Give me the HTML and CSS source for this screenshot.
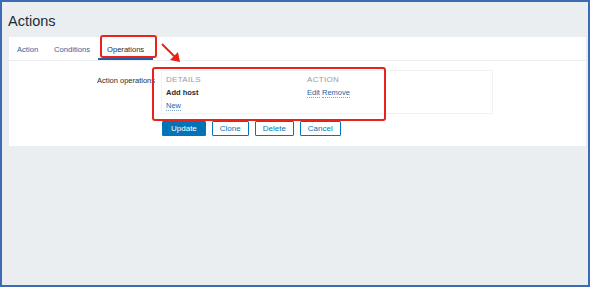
FILE: index.html
```html
<!DOCTYPE html>
<html>
<head>
<meta charset="utf-8">
<link rel="stylesheet" href="styles.css">
</head>
<body>
<div class="frame">
  <div class="topmark"></div>
  <header class="header"><h1 class="title">Actions</h1></header>
  <section class="card">
    <nav class="tabs">
      <a class="tab">Action</a>
      <a class="tab">Conditions</a>
      <a class="tab active">Operations</a>
    </nav>
    <div class="form">
      <div class="row">
        <label class="label">Action operations</label>
        <div class="ops">
          <div class="ops-grid">
            <div class="th">DETAILS</div>
            <div class="th">ACTION</div>
            <div class="td strong">Add host</div>
            <div class="td"><a class="link">Edit</a> <a class="link">Remove</a></div>
            <div class="td"><a class="link">New</a></div>
            <div class="td"></div>
          </div>
        </div>
      </div>
      <div class="buttons">
        <button class="btn primary">Update</button>
        <button class="btn">Clone</button>
        <button class="btn">Delete</button>
        <button class="btn">Cancel</button>
      </div>
    </div>
  </section>
  <div class="mark mark-tab"></div>
  <div class="mark mark-table"></div>
  <svg class="arrow" width="24" height="24" viewBox="0 0 24 24">
    <line x1="1" y1="1" x2="14" y2="14" stroke="#e8231b" stroke-width="2"/>
    <polygon points="9,17 19,19 17,9" fill="#e8231b"/>
  </svg>
</div>
</body>
</html>
```
FILE: styles.css
```css
* { box-sizing: border-box; }
html, body { margin: 0; padding: 0; }
body { font-family: "Liberation Sans", Arial, sans-serif; color: #1f2c33; }
.frame {
  position: relative;
  width: 590px;
  height: 287px;
  border: 2px solid #3d6bb3;
  background: #ebeef0;
  overflow: hidden;
}
.topmark {
  position: absolute;
  top: -2px;
  left: 208px;
  width: 28px;
  height: 2px;
  background: #5c9ae6;
}
.header {
  height: 35px;
  display: flex;
  align-items: center;
  padding-left: 6px;
}
.title {
  margin: 0;
  font-size: 14.5px;
  font-weight: normal;
  color: #1f2c33;
  padding-top: 2px;
}
.card {
  margin: 0 2px 0 7px;
  background: #fff;
  height: 109px;
}
.tabs {
  display: flex;
  height: 24px;
  border-bottom: 1px solid #ebeef0;
}
.tab {
  font-size: 7.6px;
  color: #1f65a6;
  padding: 0 8px;
  height: 23px;
  display: flex;
  align-items: center;
  padding-top: 4px;
  border-bottom: 2px solid transparent;
}
.tab.active {
  color: #1f2c33;
  border-bottom-color: #1f5fa6;
  padding: 4px 9px 0 9px;
}
.form { padding-top: 9px; }
.row { display: flex; }
.label {
  width: 152px;
  text-align: right;
  font-size: 7.5px;
  color: #1f2c33;
  padding-top: 6px;
  padding-right: 6px;
}
.ops {
  width: 332px;
  height: 44px;
  border: 1px solid #f1f2f3;
  padding: 2px 0 0 4px;
}
.ops-grid {
  display: grid;
  grid-template-columns: 141px 1fr;
  grid-auto-rows: 13px;
  font-size: 7.5px;
}
.th {
  color: #949ea5;
  letter-spacing: 0.3px;
  font-size: 8px;
  padding-top: 2px;
}
.td { padding-top: 2px; }
.strong { font-weight: bold; color: #1f2c33; }
.link {
  color: #1f65a6;
  border-bottom: 1px dotted #7ea6cc;
}
.buttons {
  display: flex;
  gap: 6px;
  padding-left: 153px;
  padding-top: 7px;
}
.btn {
  font-family: "Liberation Sans", Arial, sans-serif;
  font-size: 8px;
  height: 15px;
  padding: 0 7px;
  border: 1px solid #0275b8;
  border-radius: 1px;
  background: #fff;
  color: #0275b8;
  line-height: 13px;
}
.btn.primary { background: #0275b8; color: #fff; padding: 0 8px; }
.mark {
  position: absolute;
  border: 2px solid #e8231b;
  border-radius: 3px;
}
.mark-tab { left: 98px; top: 33px; width: 57px; height: 23px; }
.mark-table { left: 150px; top: 65px; width: 234px; height: 54px; }
.arrow { position: absolute; left: 159px; top: 41px; }
```
